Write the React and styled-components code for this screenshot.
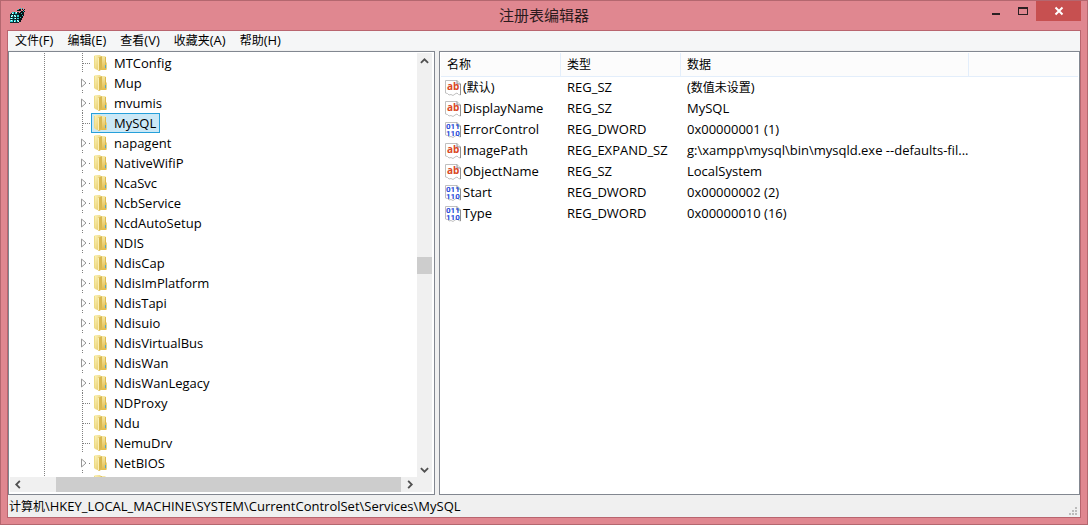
import React, { useState } from 'react';
import styled, { createGlobalStyle } from 'styled-components';

const GlobalStyle = createGlobalStyle`
  * {
    box-sizing: border-box;
  }
  body {
    margin: 0;
    font-family: 'Open Sans', 'Noto Sans CJK SC', sans-serif;
    font-size: 13px;
    line-height: 20px;
    color: #000;
  }
  button {
    padding: 0;
    border: none;
    background: none;
    font: inherit;
    color: inherit;
  }
`

const Window = styled.div`
  display: flex;
  flex-direction: column;
  height: 100vh;
  padding: 0 6px 6px;
  border: 1px solid #b4676f;
  background: #e08790;
  overflow: hidden;
`

const TitleBar = styled.header`
  display: grid;
  grid-template-columns: 1fr auto 1fr;
  flex: none;
  height: 29px;
`

const AppIcon = styled.span`
  padding: 6px 0 0 2px;
  line-height: 0;
`

const Title = styled.h1`
  margin: 0;
  font-size: 15px;
  font-weight: 400;
  line-height: 28px;
  color: #2b1a1c;
`

const WindowButtons = styled.div`
  display: flex;
  justify-content: flex-end;
  align-items: flex-start;
`

const WindowButton = styled.button`
  width: ${props => props.$close ? '45px' : '27px'};
  height: 20px;
  line-height: 0;
  background: ${props => props.$close ? '#c75050' : 'none'};
`

const Client = styled.div`
  display: flex;
  flex-direction: column;
  flex: 1;
  min-height: 0;
  border: 1px solid #b9656f;
  background: #f0f0f0;
`

const MenuBar = styled.nav`
  display: flex;
  flex: none;
  height: 19px;
  background: #f5f6f7;
`

const MenuButton = styled.button`
  padding: 0 7px;
  height: 19px;
  line-height: 19px;
  white-space: nowrap;
  &:hover {
    background: #d5e7f8;
  }
`

const Han = styled.span`
  font-size: 12px;
`

const Panes = styled.main`
  display: grid;
  grid-template-columns: 427px minmax(0, 1fr);
  gap: 4px;
  flex: 1;
  min-height: 0;
  padding-top: 1px;
`

const Pane = styled.section`
  min-width: 0;
  min-height: 0;
  padding: 1px;
  border: 1px solid #828790;
  background: #fff;
  overflow: hidden;
`

const TreePane = styled(Pane)`
  display: grid;
  grid-template: minmax(0, 1fr) 15px / minmax(0, 1fr) 15px;
  padding: 1px 2px 2px 1px;
`

const Tree = styled.ul`
  margin: 0;
  padding: 0 0 0 71px;
  list-style: none;
  overflow: hidden;
  background: repeating-linear-gradient(#808080 0 1px, transparent 1px 2px) 34px 0 / 1px 100% no-repeat;
`

const TreeRow = styled.li`
  display: flex;
  align-items: center;
  height: 20px;
`

const Branch = styled.span`
  display: flex;
  align-items: center;
  flex: none;
  width: 10px;
  height: 20px;
  background:
    repeating-linear-gradient(#808080 0 1px, transparent 1px 2px) 1px 100% / 1px ${props => props.$open ? '3px' : '100%'} no-repeat,
    repeating-linear-gradient(90deg, #808080 0 1px, transparent 1px 2px) 100% 10px / ${props => props.$open ? '2px' : '8px'} 1px no-repeat;
`

const Expander = styled.button`
  width: 7px;
  height: 10px;
  line-height: 0;
`

const TreeLabel = styled.button`
  display: flex;
  align-items: center;
  gap: 5px;
  height: 20px;
  padding: 0 3px 0 1px;
  border: 1px solid ${props => props.$selected ? '#26a0da' : 'transparent'};
  background: ${props => props.$selected ? '#cbe8f6' : 'none'};
  line-height: 18px;
  white-space: nowrap;
`

const KeyName = styled.span`
  padding-bottom: 1px;
`

const ScrollBar = styled.div`
  display: flex;
  flex-direction: ${props => props.$vertical ? 'column' : 'row'};
  background: #f0f0f0;
`

const ScrollButton = styled.button`
  display: flex;
  align-items: center;
  justify-content: center;
  flex: 0 0 16px;
`

const ScrollSpace = styled.div`
  flex: ${props => props.$grow};
`

const Thumb = styled.div`
  flex: ${props => props.$grow || '0 0 17px'};
  background: #cdcdcd;
`

const Corner = styled.div`
  background: #f0f0f0;
`

const ValueTable = styled.table`
  width: 100%;
  table-layout: fixed;
  border-collapse: separate;
  border-spacing: 0;
  th, td {
    padding: 0 0 0 6px;
    text-align: left;
    font-weight: 400;
    white-space: nowrap;
    overflow: hidden;
  }
  th {
    height: 24px;
    border-right: 1px solid #e3eefb;
    border-bottom: 1px solid #e3eefb;
    background: #fcfcfc;
  }
  th:last-child {
    border-right: none;
  }
  td {
    height: 21px;
    line-height: 21px;
    vertical-align: top;
  }
  td:first-child {
    padding-left: 4px;
  }
`

const Col = styled.col`
  width: ${props => props.$width};
`

const ValueName = styled.span`
  display: flex;
  align-items: center;
  gap: 2px;
`

const StatusBar = styled.footer`
  display: flex;
  justify-content: space-between;
  align-items: flex-end;
  flex: none;
  height: 22px;
  padding: 0 2px 1px 1px;
`

const StatusText = styled.span`
  line-height: 19px;
  white-space: nowrap;
`

const KEYS = [
  ['MTConfig', false],
  ['Mup', true],
  ['mvumis', true],
  ['MySQL', false],
  ['napagent', true],
  ['NativeWifiP', true],
  ['NcaSvc', true],
  ['NcbService', true],
  ['NcdAutoSetup', true],
  ['NDIS', true],
  ['NdisCap', true],
  ['NdisImPlatform', true],
  ['NdisTapi', true],
  ['Ndisuio', true],
  ['NdisVirtualBus', true],
  ['NdisWan', true],
  ['NdisWanLegacy', true],
  ['NDProxy', false],
  ['Ndu', false],
  ['NemuDrv', false],
  ['NetBIOS', true],
  ['', true],
]

const VALUES = [
  { name: '(默认)', type: 'REG_SZ', data: '(数值未设置)' },
  { name: 'DisplayName', type: 'REG_SZ', data: 'MySQL' },
  { name: 'ErrorControl', type: 'REG_DWORD', data: '0x00000001 (1)' },
  { name: 'ImagePath', type: 'REG_EXPAND_SZ', data: 'g:\\xampp\\mysql\\bin\\mysqld.exe --defaults-fil...' },
  { name: 'ObjectName', type: 'REG_SZ', data: 'LocalSystem' },
  { name: 'Start', type: 'REG_DWORD', data: '0x00000002 (2)' },
  { name: 'Type', type: 'REG_DWORD', data: '0x00000010 (16)' },
]

const MENUS = ['文件(F)', '编辑(E)', '查看(V)', '收藏夹(A)', '帮助(H)']

// Chinese runs are set one size below the latin ones
const Mixed = ({ text }) => (
  <>
    {text.split(/([\u4e00-\u9fff]+)/).filter(Boolean).map((part, i) =>
      /[\u4e00-\u9fff]/.test(part) ? <Han key={i}>{part}</Han> : part
    )}
  </>
)

const RegeditIcon = () => (
  <svg width="17" height="17" viewBox="0 0 17 17" shapeRendering="crispEdges">
    <path d="M1 7h1v-1h1v-1h7v1h1v9h-1v1h-9z" fill="#0c2a2e" />
    <path d="M11 5l2-1h2v5h-1v2h-1v2h-1v2h-2v-9z" fill="#061416" />
    <path d="M3 5h2v2h-2zM6 5h2v2h-2zM2 8h2v2h-2zM5 8h2v2h-2zM8 8h2v2h-2zM1 11h3v1h-3zM5 11h2v1h-2zM8 11h2v1h-2zM1 13h3v2h-3zM5 13h2v2h-2zM8 13h2v2h-2z" fill="#35d6d8" />
    <path d="M3 6h1v1h-1zM7 5h1v1h-1zM2 9h1v1h-1zM3 8h1v1h-1zM6 9h1v1h-1zM5 8h1v1h-1zM2 11h1v1h-1zM6 11h1v1h-1zM2 13h1v1h-1zM5 14h1v1h-1zM8 13h1v1h-1zM9 14h1v1h-1z" fill="#effffF" />
    <path d="M8 3h2v1h-2zM10 2h2v2h-2zM13 2h1v1h-1zM15 2h1v1h-1zM14 3h1v1h-1zM15 4h1v1h-1z" fill="#061416" />
    <path d="M9 2h1v1h-1zM11 1h1v1h-1zM13 1h1v1h-1zM14 4h1v1h-1zM12 6h1v1h-1zM13 8h1v1h-1zM11 10h1v1h-1z" fill="#2fb9bd" />
  </svg>
)

const FolderIcon = () => (
  <svg width="16" height="16" viewBox="0 0 16 16">
    <defs>
      <linearGradient id="front" x1="0" x2="1" y1="0" y2="1">
        <stop offset="0" stopColor="#fdf6c0" />
        <stop offset="1" stopColor="#e3c35a" />
      </linearGradient>
      <linearGradient id="back" x1="0" x2="0" y1="0" y2="1">
        <stop offset="0" stopColor="#f6e9a8" />
        <stop offset="1" stopColor="#e2bb4b" />
      </linearGradient>
    </defs>
    <path d="M6 1h6l1 1v5l1 1v6l-1 1H6z" fill="url(#back)" />
    <path d="M12.500 2v12" stroke="#dcb94f" />
    <path d="M1 1l1-1h5l1 1v13l-1 2-5-2-1-1z" fill="url(#front)" />
    <path d="M1.500 1v12" stroke="#eedc85" />
    <path d="M5 3l4-2v12l-3 3-1-1z" fill="#d9b850" />
    <path d="M5.500 3v12" stroke="#fbf0b4" />
    <path d="M12 10h1v3h-1z" fill="#58a6c4" />
    <path d="M13.500 8v6" stroke="#e9d685" />
  </svg>
)

const ValueIcon = ({ binary }) => (
  <svg width="16" height="16" viewBox="0 0 16 16">
    <path d="M.5.5h11.500l3.500 3.500v11l-2-.5-1.500-1.500-2 1-2 1.500-2-1-2 .5-1.500-1.500-2-.5z" fill="#fff" stroke="#c0c0c0" />
    <path d="M12 .5v3.500h3.500" fill="#ececec" stroke="#909090" />
    <path d="M15.500 4v11" stroke="#909090" />
    {binary ? (
      <g fill="#2447d8" fontFamily="Roboto" fontWeight="700" fontSize="8">
        <text x="1" y="7">011</text>
        <text x="1" y="14">110</text>
      </g>
    ) : (
      <text x="2" y="10" fill="#d9481f" fontFamily="Open Sans" fontWeight="700" fontSize="10">ab</text>
    )}
  </svg>
)

const ARROWS = {
  up: 'M1 6.500l4-4 4 4',
  down: 'M1 3.500l4 4 4-4',
  left: 'M6.500 1l-4 4 4 4',
  right: 'M3.500 1l4 4-4 4',
}

const Arrow = ({ direction }) => (
  <svg width="9" height="9" viewBox="0 0 10 10">
    <path d={ARROWS[direction]} fill="none" stroke="#505050" strokeWidth="2" />
  </svg>
)

const KeyTree = ({ selected, onSelect }) => (
  <TreePane aria-label="注册表项">
    <Tree>
      {KEYS.map(([name, open]) => (
        <TreeRow key={name}>
          <Branch $open={open}>
            {open &&
              <Expander aria-label={`展开 ${name}`}>
                <svg width="7" height="10" viewBox="0 0 7 10">
                  <path d="M.5 1v8l4.500-4z" fill="#fff" stroke="#969696" />
                </svg>
              </Expander>
            }
          </Branch>
          <TreeLabel $selected={name === selected} onClick={() => onSelect(name)}>
            <FolderIcon />
            <KeyName>{name}</KeyName>
          </TreeLabel>
        </TreeRow>
      ))}
    </Tree>
    <ScrollBar $vertical>
      <ScrollButton aria-label="向上"><Arrow direction="up" /></ScrollButton>
      <ScrollSpace $grow={1} />
      <Thumb />
      <ScrollSpace $grow={1} />
      <ScrollButton aria-label="向下"><Arrow direction="down" /></ScrollButton>
    </ScrollBar>
    <ScrollBar>
      <ScrollButton aria-label="向左"><Arrow direction="left" /></ScrollButton>
      <ScrollSpace $grow={30} />
      <Thumb $grow={343} />
      <ScrollButton aria-label="向右"><Arrow direction="right" /></ScrollButton>
    </ScrollBar>
    <Corner />
  </TreePane>
)

const ValueList = () => (
  <Pane>
    <ValueTable>
      <colgroup>
        <Col $width="120px" />
        <Col $width="120px" />
        <Col $width="288px" />
        <Col />
      </colgroup>
      <thead>
        <tr>
          <th><Han>名称</Han></th>
          <th><Han>类型</Han></th>
          <th><Han>数据</Han></th>
          <th aria-hidden="true" />
        </tr>
      </thead>
      <tbody>
        {VALUES.map(value => (
          <tr key={value.name}>
            <td>
              <ValueName>
                <ValueIcon binary={value.type === 'REG_DWORD'} />
                <span><Mixed text={value.name} /></span>
              </ValueName>
            </td>
            <td>{value.type}</td>
            <td><Mixed text={value.data} /></td>
            <td />
          </tr>
        ))}
      </tbody>
    </ValueTable>
  </Pane>
)

const App = () => {
  const [selected, setSelected] = useState('MySQL');
  return (
    <>
      <GlobalStyle />
      <Window>
        <TitleBar>
          <AppIcon><RegeditIcon /></AppIcon>
          <Title>注册表编辑器</Title>
          <WindowButtons>
            <WindowButton aria-label="最小化">
              <svg width="10" height="10"><path d="M1 7h8v2H1z" fill="#2b2023" /></svg>
            </WindowButton>
            <WindowButton aria-label="最大化">
              <svg width="10" height="10"><path d="M0 1h10v8H0zM1 3v5h8V3z" fill="#2b2023" fillRule="evenodd" /></svg>
            </WindowButton>
            <WindowButton $close aria-label="关闭">
              <svg width="10" height="10"><path d="M1.500 1.500l7 7M8.500 1.500l-7 7" stroke="#fff" strokeWidth="2" /></svg>
            </WindowButton>
          </WindowButtons>
        </TitleBar>
        <Client>
          <MenuBar>
            {MENUS.map(menu => (
              <MenuButton key={menu}><Mixed text={menu} /></MenuButton>
            ))}
          </MenuBar>
          <Panes>
            <KeyTree selected={selected} onSelect={setSelected} />
            <ValueList />
          </Panes>
          <StatusBar>
            <StatusText>
              <Mixed text={`计算机\\HKEY_LOCAL_MACHINE\\SYSTEM\\CurrentControlSet\\Services\\${selected}`} />
            </StatusText>
            <svg width="9" height="9" viewBox="0 0 9 9">
              <path d="M6 0h2v2h-2zM3 3h2v2h-2zM6 3h2v2h-2zM0 6h2v2h-2zM3 6h2v2h-2zM6 6h2v2h-2z" fill="#bcbcbc" />
            </svg>
          </StatusBar>
        </Client>
      </Window>
    </>
  );
};

export default App;
